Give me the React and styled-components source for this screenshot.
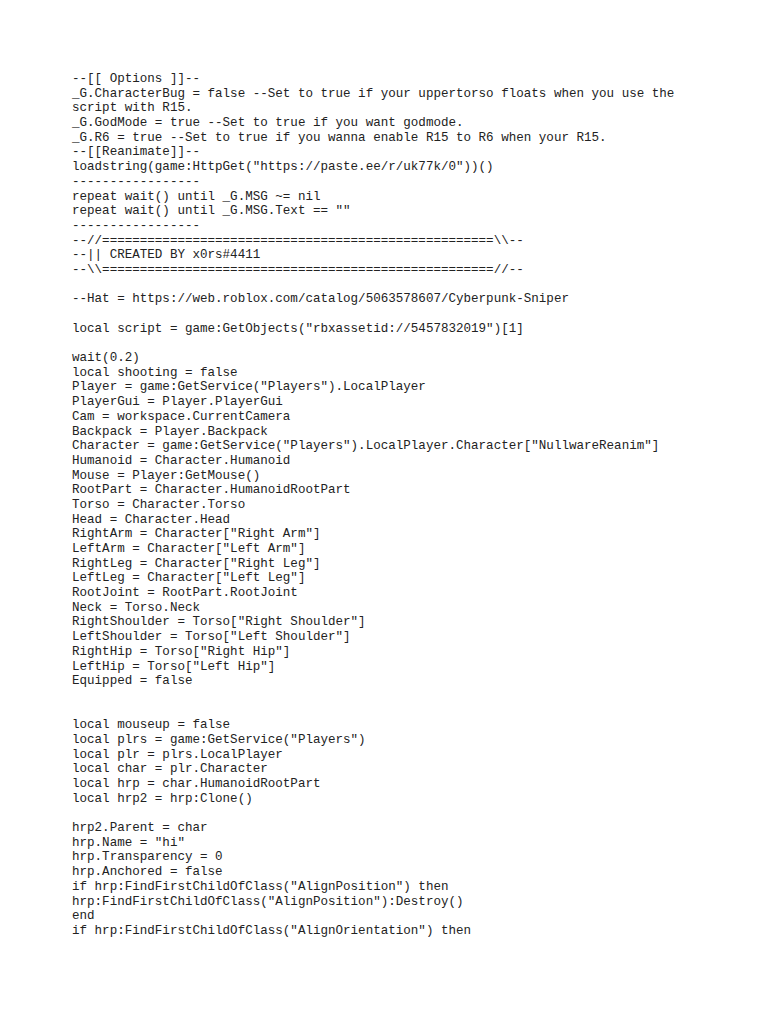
import React from "react";
import styled, { createGlobalStyle } from "styled-components";

const GlobalStyle = createGlobalStyle`
  html, body {
    margin: 0;
    padding: 0;
    background: #ffffff;
  }
`;

const Page = styled.div`
  width: 768px;
  height: 1024px;
  box-sizing: border-box;
  padding: 72px 0 0 72px;
  background: #ffffff;
  overflow: hidden;
`;

const Code = styled.div`
  display: flex;
  flex-direction: column;
  font-family: "Liberation Mono", "DejaVu Sans Mono", monospace;
  font-size: 12.55px;
  color: #222222;
`;

const Line = styled.div`
  height: 14.69px;
  line-height: 14.69px;
  white-space: pre;
`;

const eq = "=".repeat(52);
const dashes = "-".repeat(17);

const lines = [
  "--[[ Options ]]--",
  "_G.CharacterBug = false --Set to true if your uppertorso floats when you use the",
  "script with R15.",
  "_G.GodMode = true --Set to true if you want godmode.",
  "_G.R6 = true --Set to true if you wanna enable R15 to R6 when your R15.",
  "--[[Reanimate]]--",
  'loadstring(game:HttpGet("https://paste.ee/r/uk77k/0"))()',
  dashes,
  "repeat wait() until _G.MSG ~= nil",
  'repeat wait() until _G.MSG.Text == ""',
  dashes,
  "--//" + eq + "\\\\--",
  "--|| CREATED BY x0rs#4411",
  "--\\\\" + eq + "//--",
  "",
  "--Hat = https://web.roblox.com/catalog/5063578607/Cyberpunk-Sniper",
  "",
  'local script = game:GetObjects("rbxassetid://5457832019")[1]',
  "",
  "wait(0.2)",
  "local shooting = false",
  'Player = game:GetService("Players").LocalPlayer',
  "PlayerGui = Player.PlayerGui",
  "Cam = workspace.CurrentCamera",
  "Backpack = Player.Backpack",
  'Character = game:GetService("Players").LocalPlayer.Character["NullwareReanim"]',
  "Humanoid = Character.Humanoid",
  "Mouse = Player:GetMouse()",
  "RootPart = Character.HumanoidRootPart",
  "Torso = Character.Torso",
  "Head = Character.Head",
  'RightArm = Character["Right Arm"]',
  'LeftArm = Character["Left Arm"]',
  'RightLeg = Character["Right Leg"]',
  'LeftLeg = Character["Left Leg"]',
  "RootJoint = RootPart.RootJoint",
  "Neck = Torso.Neck",
  'RightShoulder = Torso["Right Shoulder"]',
  'LeftShoulder = Torso["Left Shoulder"]',
  'RightHip = Torso["Right Hip"]',
  'LeftHip = Torso["Left Hip"]',
  "Equipped = false",
  "",
  "",
  "local mouseup = false",
  'local plrs = game:GetService("Players")',
  "local plr = plrs.LocalPlayer",
  "local char = plr.Character",
  "local hrp = char.HumanoidRootPart",
  "local hrp2 = hrp:Clone()",
  "",
  "hrp2.Parent = char",
  'hrp.Name = "hi"',
  "hrp.Transparency = 0",
  "hrp.Anchored = false",
  'if hrp:FindFirstChildOfClass("AlignPosition") then',
  'hrp:FindFirstChildOfClass("AlignPosition"):Destroy()',
  "end",
  'if hrp:FindFirstChildOfClass("AlignOrientation") then',
];

export default function App() {
  return (
    <>
      <GlobalStyle />
      <Page>
        <Code>
          {lines.map((text, i) => (
            <Line key={i}>{text}</Line>
          ))}
        </Code>
      </Page>
    </>
  );
}
